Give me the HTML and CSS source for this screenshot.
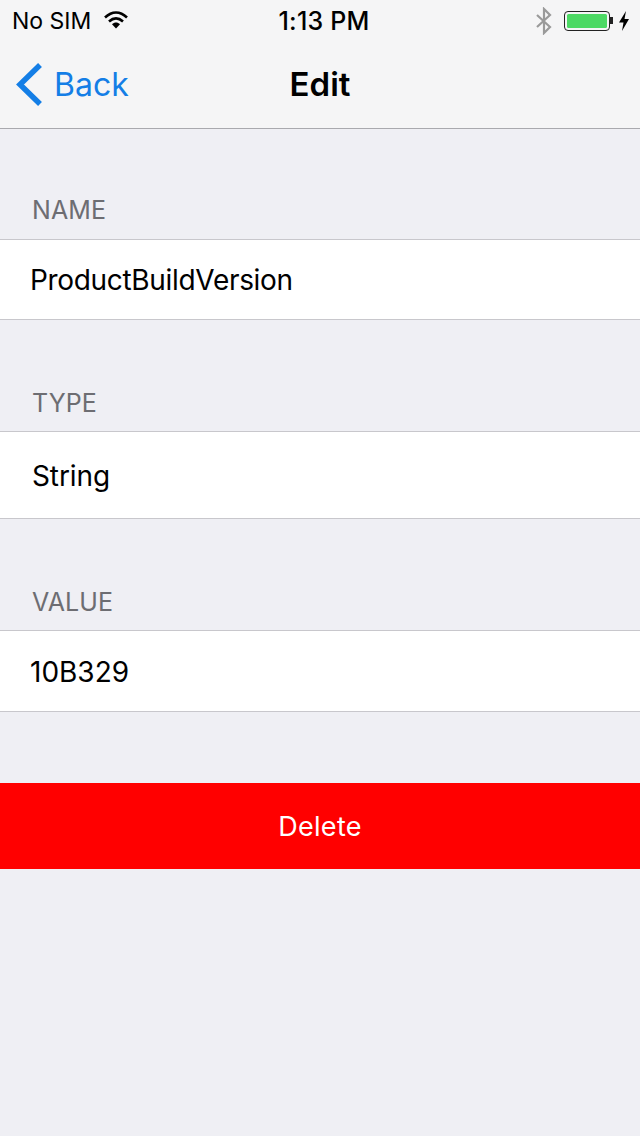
FILE: index.html
```html
<!DOCTYPE html>
<html lang="en">
<head>
<meta charset="utf-8">
<title>Edit</title>
<link rel="stylesheet" href="styles.css">
</head>
<body>
<header class="bar">
  <div class="status">
    <div class="status-left">
      <span>No SIM</span>
      <svg class="wifi" width="26" height="20" viewBox="0 0 26 20"><path d="M2 7.500C9 1 17 1 24 7.500" fill="none" stroke="#000" stroke-width="2.600"/><path d="M6 11.500C10.500 7.500 15.500 7.500 20 11.500" fill="none" stroke="#000" stroke-width="2.600"/><path d="M9 14.200C11.500 11.800 14.500 11.800 17 14.200L13 18.500Z" fill="#000"/></svg>
    </div>
    <div class="status-time">1:13 PM</div>
    <div class="status-right">
      <svg class="bt" width="20" height="28" viewBox="0 0 20 28"><path d="M3 8L16 20L10 26V2L16 8L3 20" fill="none" stroke="#9a9a9a" stroke-width="2.200"/></svg>
      <div class="battery"><div class="battery-fill"></div></div>
      <div class="battery-nub"></div>
      <svg class="bolt" width="12" height="22" viewBox="0 0 12 20"><path d="M8 0L1 11.500H5.500L4 20L11 8H6.500Z" fill="#000"/></svg>
    </div>
  </div>
  <nav class="nav">
    <div class="back">
      <svg width="28" height="44" viewBox="0 0 28 44"><path d="M25 3L5 22.500L25 42" fill="none" stroke="#147EE6" stroke-width="5.500"/></svg>
      <span>Back</span>
    </div>
    <div class="title">Edit</div>
  </nav>
</header>
<main>
  <div class="label label-name">NAME</div>
  <div class="row row-name"><span class="inset-a">ProductBuildVersion</span></div>
  <div class="label label-type">TYPE</div>
  <div class="row row-type"><span class="inset-b">String</span></div>
  <div class="label label-value">VALUE</div>
  <div class="row row-value"><span class="inset-a">10B329</span></div>
  <button class="delete" type="button">Delete</button>
</main>
</body>
</html>
```
FILE: styles.css
```css
* { box-sizing: border-box; }
html, body { margin: 0; padding: 0; }
body {
  width: 640px;
  height: 1136px;
  overflow: hidden;
  background: #efeff4;
  font-family: Inter, "Liberation Sans", sans-serif;
  color: #000;
}
.bar {
  height: 129px;
  background: #f5f5f6;
  border-bottom: 1px solid #a9a9ae;
}
.status {
  height: 41px;
  display: grid;
  grid-template-columns: 1fr auto 1fr;
  align-items: center;
  padding: 0 10px 0 12px;
  font-size: 23px;
}
.status-left { display: flex; align-items: center; gap: 12px; }
.wifi { display: block; margin-top: -2px; }
.status-time { font-weight: 500; font-size: 25px; letter-spacing: 0.200px; padding-left: 6px; }
.status-right { display: flex; align-items: center; justify-content: flex-end; }
.bt { margin-right: 10px; }
.battery {
  width: 46px;
  height: 20px;
  border: 1.500px solid #222;
  border-radius: 4px;
  padding: 2px;
}
.battery-fill { height: 100%; background: #4cd964; border-radius: 1.500px; }
.battery-nub { width: 3px; height: 7px; background: #222; margin-right: 5px; }
.nav {
  position: relative;
  height: 87px;
  display: flex;
  align-items: center;
  justify-content: center;
  padding-bottom: 2px;
}
.back {
  position: absolute;
  left: 15px;
  top: 21px;
  display: flex;
  align-items: center;
  gap: 11px;
  color: #147ee6;
  font-size: 32px;
}
.back svg { display: block; }
.title { font-size: 33px; font-weight: 600; }
.label {
  padding-left: 32px;
  font-size: 25px;
  line-height: 30px;
  color: #6d6d72;
  letter-spacing: 0.100px;
}
.label-name { margin-top: 66px; height: 44px; }
.label-type { margin-top: 68px; height: 43px; }
.label-value { margin-top: 68px; height: 43px; }
.row {
  display: flex;
  align-items: center;
  background: #fff;
  border-top: 1px solid #c8c7cc;
  border-bottom: 1px solid #c8c7cc;
  font-size: 28px;
}
.row-name { height: 81px; letter-spacing: -0.320px; }
.row-type { height: 88px; padding-top: 2px; letter-spacing: -0.100px; }
.row-value { height: 82px; padding-top: 1px; }
.inset-a { padding-left: 30px; }
.inset-b { padding-left: 32px; }
.delete {
  display: block;
  width: 100%;
  height: 86px;
  margin-top: 71px;
  border: 0;
  padding: 0;
  background: #ff0000;
  color: #fff;
  font: inherit;
  font-size: 27px;
  letter-spacing: 0.300px;
}
```
